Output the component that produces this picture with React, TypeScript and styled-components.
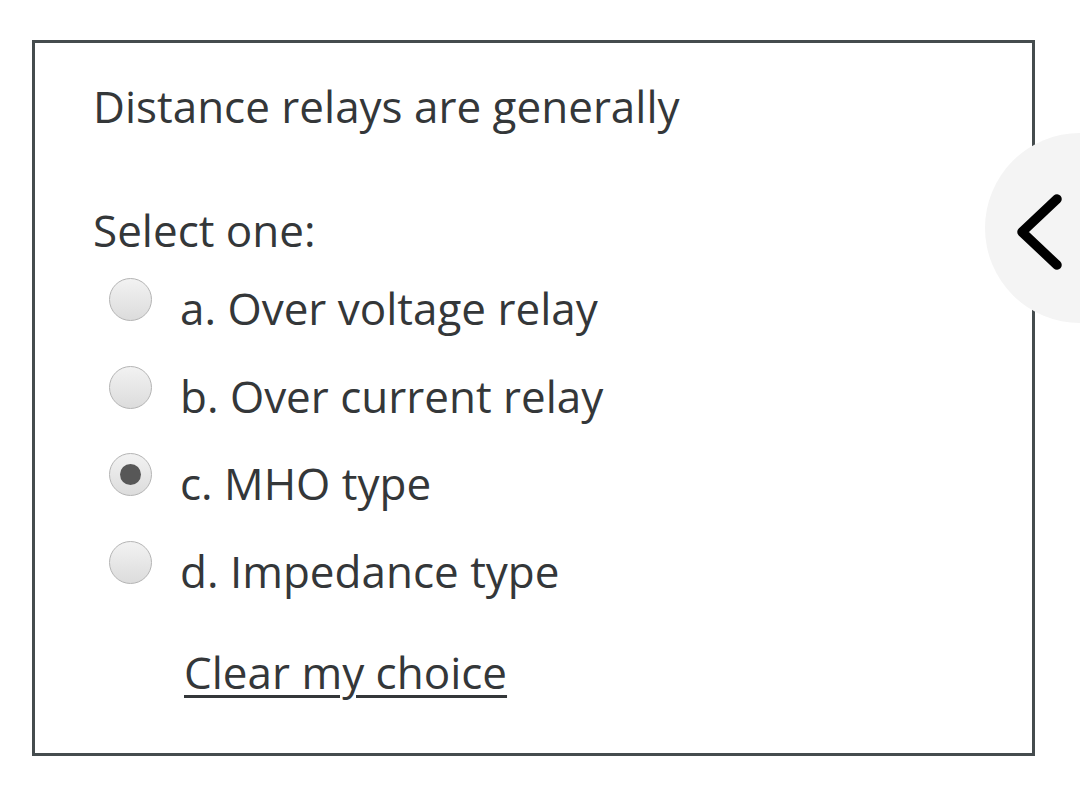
import React from "react";
import styled, { createGlobalStyle } from "styled-components";

const Global = createGlobalStyle`
  html, body { margin: 0; padding: 0; background: #ffffff; }
  body { font-family: "Open Sans", "Noto Sans", sans-serif; color: #343739; width: 1080px; height: 805px; overflow: hidden; }
`;

const Page = styled.div`
  position: relative;
  width: 1080px;
  height: 805px;
  padding: 40px 0 0 32px;
  box-sizing: border-box;
  overflow: hidden;
`;

const Card = styled.div`
  width: 1003px;
  height: 716px;
  box-sizing: border-box;
  border: 3px solid #454c4e;
  padding: 37px 0 0 58px;
  display: flex;
  flex-direction: column;
`;

const Question = styled.div`
  font-size: 44px;
  line-height: 52px;
`;

const Prompt = styled.div`
  font-size: 44px;
  line-height: 52px;
  margin-top: 72px;
`;

const Options = styled.div`
  display: flex;
  flex-direction: column;
  margin-top: 26px;
`;

const Row = styled.label`
  display: flex;
  align-items: flex-start;
  height: 87.7px;
`;

const Radio = styled.span<{ $checked?: boolean }>`
  width: 43px;
  height: 43px;
  border-radius: 50%;
  box-sizing: border-box;
  border: 1.5px solid #b4b4b4;
  background: linear-gradient(#f2f2f2, #dcdcdc);
  margin: -4px 0 0 16px;
  display: flex;
  align-items: center;
  justify-content: center;
  flex-shrink: 0;
  &::after {
    content: "";
    display: ${(p) => (p.$checked ? "block" : "none")};
    width: 21px;
    height: 21px;
    border-radius: 50%;
    background: #575757;
  }
`;

const Label = styled.span`
  font-size: 44px;
  line-height: 52px;
  margin-left: 28px;
`;

const Clear = styled.a`
  font-size: 44px;
  line-height: 52px;
  color: #343739;
  text-decoration: underline;
  text-decoration-thickness: 3px;
  text-underline-offset: 6px;
  margin: 13px 0 0 91px;
  align-self: flex-start;
`;

const Toggle = styled.div`
  position: absolute;
  left: 985px;
  top: 133px;
  width: 190px;
  height: 190px;
  border-radius: 50%;
  background: #f4f4f4;
`;

const Chevron = styled.svg`
  position: absolute;
  left: 1010px;
  top: 190px;
`;

const options = [
  { key: "a", text: "a. Over voltage relay" },
  { key: "b", text: "b. Over current relay" },
  { key: "c", text: "c. MHO type", checked: true },
  { key: "d", text: "d. Impedance type" },
];

export default function App() {
  return (
    <>
      <Global />
      <Page>
        <Card>
          <Question>Distance relays are generally</Question>
          <Prompt>Select one:</Prompt>
          <Options>
            {options.map((o) => (
              <Row key={o.key}>
                <Radio $checked={o.checked} />
                <Label>{o.text}</Label>
              </Row>
            ))}
          </Options>
          <Clear href="#">Clear my choice</Clear>
        </Card>
        <Toggle />
        <Chevron width="60" height="84" viewBox="0 0 60 84">
          <polyline
            points="47,9 12,42 47,75"
            fill="none"
            stroke="#000"
            strokeWidth="9.5"
            strokeLinecap="round"
            strokeLinejoin="round"
          />
        </Chevron>
      </Page>
    </>
  );
}
